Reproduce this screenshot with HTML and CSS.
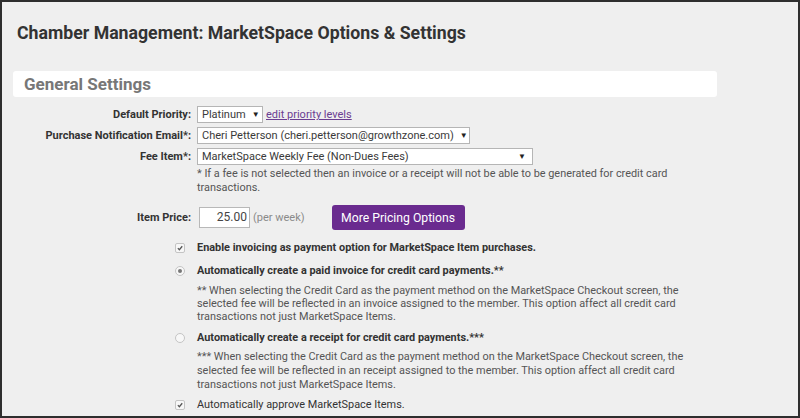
FILE: index.html
```html
<!DOCTYPE html>
<html>
<head>
<meta charset="utf-8">
<link rel="stylesheet" href="styles.css">
</head>
<body>
<div class="frame">
  <h1 class="title">Chamber Management: MarketSpace Options &amp; Settings</h1>
  <div class="section-bar">General Settings</div>

  <div class="row r1">
    <div class="label">Default Priority:</div>
    <div class="ctrl">
      <div class="select s-priority"><span>Platinum</span><span class="arrow">▼</span></div>
      <a class="link" href="#">edit priority levels</a>
    </div>
  </div>

  <div class="row r2">
    <div class="label">Purchase Notification Email*:</div>
    <div class="ctrl">
      <div class="select s-email"><span>Cheri Petterson (cheri.petterson@growthzone.com)</span><span class="arrow">▼</span></div>
    </div>
  </div>

  <div class="row r3">
    <div class="label">Fee Item*:</div>
    <div class="ctrl">
      <div class="select s-fee"><span>MarketSpace Weekly Fee (Non-Dues Fees)</span><span class="arrow">▼</span></div>
    </div>
  </div>

  <div class="row note-row n1">
    <div></div>
    <div class="note">* If a fee is not selected then an invoice or a receipt will not be able to be generated for credit card transactions.</div>
  </div>

  <div class="row price-row">
    <div class="label">Item Price:</div>
    <div class="ctrl">
      <div class="input">25.00</div>
      <span class="unit">(per week)</span>
      <button class="btn">More Pricing Options</button>
    </div>
  </div>

  <div class="row opt cb1">
    <div class="mark"><span class="checkbox"><svg viewBox="0 0 10 10" width="10" height="10"><path d="M2.3 5.2 L4.2 7.1 L7.8 2.8" fill="none" stroke="#555" stroke-width="1.6"/></svg></span></div>
    <div class="opt-text bold">Enable invoicing as payment option for MarketSpace Item purchases.</div>
  </div>

  <div class="row opt rd1">
    <div class="mark"><span class="radio on"></span></div>
    <div class="opt-text bold">Automatically create a paid invoice for credit card payments.**</div>
  </div>

  <div class="row note-row n2">
    <div></div>
    <div class="note">** When selecting the Credit Card as the payment method on the MarketSpace Checkout screen, the selected fee will be reflected in an invoice assigned to the member. This option affect all credit card transactions not just MarketSpace Items.</div>
  </div>

  <div class="row opt rd2">
    <div class="mark"><span class="radio"></span></div>
    <div class="opt-text bold">Automatically create a receipt for credit card payments.***</div>
  </div>

  <div class="row note-row n3">
    <div></div>
    <div class="note">*** When selecting the Credit Card as the payment method on the MarketSpace Checkout screen, the selected fee will be reflected in an receipt assigned to the member. This option affect all credit card transactions not just MarketSpace Items.</div>
  </div>

  <div class="row opt cb2">
    <div class="mark"><span class="checkbox"><svg viewBox="0 0 10 10" width="10" height="10"><path d="M2.3 5.2 L4.2 7.1 L7.8 2.8" fill="none" stroke="#555" stroke-width="1.6"/></svg></span></div>
    <div class="opt-text">Automatically approve MarketSpace Items.</div>
  </div>
</div>
</body>
</html>
```
FILE: styles.css
```css
html, body {
  margin: 0;
  padding: 0;
}
body {
  width: 800px;
  height: 418px;
  overflow: hidden;
  font-family: Roboto, "Liberation Sans", Arial, sans-serif;
  font-size: 11px;
  color: #333;
}
.frame {
  box-sizing: border-box;
  width: 800px;
  height: 418px;
  border: 2px solid #2e2e2e;
  background: #efefef;
  overflow: hidden;
}
.title {
  margin: 20px 0 0 15px;
  font-size: 17.7px;
  line-height: 22px;
  font-weight: 700;
  color: #333;
}
.section-bar {
  margin: 27px 0 0 11px;
  width: 693px;
  height: 26px;
  line-height: 26px;
  padding-left: 11px;
  background: #fff;
  border-radius: 3px;
  font-size: 17px;
  font-weight: 700;
  color: #777;
}
.row {
  display: grid;
  grid-template-columns: 189px 1fr;
  column-gap: 6px;
  align-items: center;
}
.label {
  text-align: right;
  font-weight: 700;
  color: #333;
}
.ctrl {
  display: flex;
  align-items: center;
}
.select {
  box-sizing: border-box;
  height: 17px;
  display: flex;
  align-items: center;
  justify-content: space-between;
  padding: 0 6px 0 4px;
  background: #fff;
  border: 1px solid #b5b5b5;
  color: #3a3a3a;
  font-size: 11px;
  white-space: nowrap;
}
.select .arrow {
  font-size: 8px;
  color: #222;
  margin-left: 6px;
}
.s-priority { width: 66px; }
.s-email { width: 273px; }
.s-fee { width: 336px; }
.link {
  margin-left: 3px;
  color: #6b3d92;
  text-decoration: underline;
}
.r1 { margin-top: 9px; }
.r2 { margin-top: 4px; }
.r3 { margin-top: 4px; }
.note {
  width: 492px;
  font-size: 10.9px;
  line-height: 14px;
  color: #555;
}
.n1 { margin-top: 2px; }
.price-row { margin-top: 10px; }
.input {
  box-sizing: border-box;
  width: 51px;
  height: 21px;
  margin-left: 2px;
  padding-right: 2px;
  line-height: 19px;
  text-align: right;
  background: #fff;
  border: 1px solid #b8b8b8;
  font-size: 12px;
  color: #444;
}
.unit {
  margin-left: 3px;
  color: #8a8a8a;
  font-size: 11px;
}
.btn {
  margin-left: 27px;
  width: 133px;
  height: 25px;
  border: none;
  border-radius: 3px;
  background: #6a2b8f;
  color: #fff;
  font-family: Roboto, "Liberation Sans", Arial, sans-serif;
  font-size: 12.2px;
  font-weight: 400;
  padding: 0;
}
.opt { line-height: 16px; font-size: 10.9px; }
.mark {
  display: flex;
  justify-content: flex-end;
  align-items: center;
  padding-right: 6px;
}
.opt-text { color: #333; }
.bold { font-weight: 700; }
.checkbox {
  box-sizing: border-box;
  width: 10px;
  height: 10px;
  border: 1px solid #c4c4c4;
  border-radius: 2px;
  background: #f7f7f7;
  display: flex;
  align-items: center;
  justify-content: center;
}
.checkbox svg { display: block; }
.radio {
  box-sizing: border-box;
  width: 10px;
  height: 10px;
  border: 1px solid #c4c4c4;
  border-radius: 50%;
  background: #f7f7f7;
  position: relative;
}
.radio.on::after {
  content: "";
  position: absolute;
  left: 2px;
  top: 2px;
  width: 4px;
  height: 4px;
  border-radius: 50%;
  background: #777;
}
.cb1 { margin-top: 10px; }
.rd1 { margin-top: 7px; }
.n2 { margin-top: 5px; }
.n2 .note { line-height: 13px; }
.rd2 { margin-top: 7px; }
.n3 { margin-top: 4px; }
.cb2 { margin-top: 5px; }
```
